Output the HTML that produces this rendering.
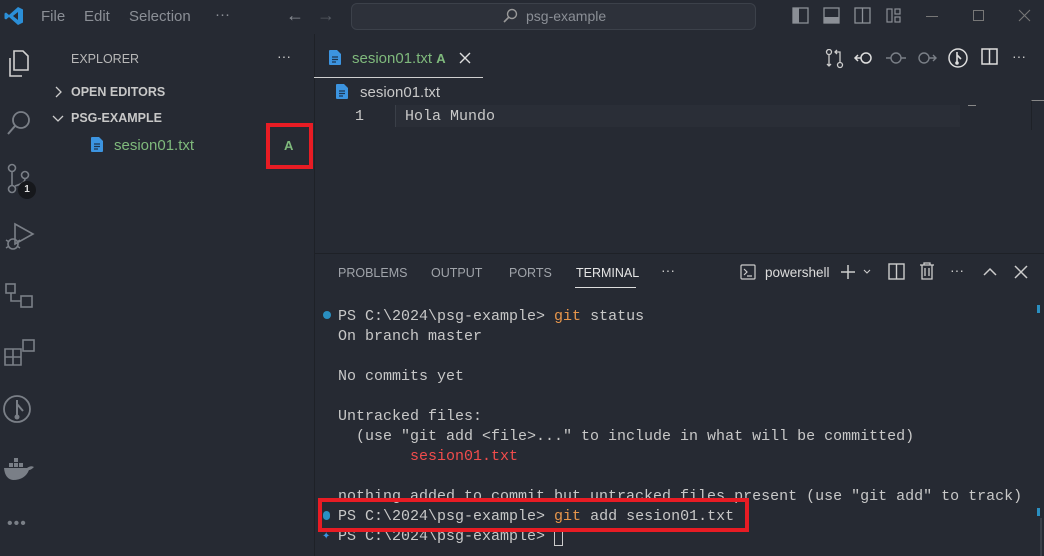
<!DOCTYPE html>
<html><head><style>
*{margin:0;padding:0;box-sizing:border-box}
body{width:1044px;height:556px;background:#262a33;font-family:"Liberation Sans",sans-serif;color:#ccc;position:relative;overflow:hidden}
.a{position:absolute}
.mono{font-family:"Liberation Mono",monospace;font-size:15px}
.t{position:absolute;left:338px;white-space:pre;color:#c8c8c8}
svg{position:absolute}
</style></head><body>
<!-- title bar -->
<svg style="left:4px;top:6px" width="20" height="20" viewBox="0 0 20 20"><path d="M14 1 L19 3.5 V16.5 L14 19 L5 11 L2 13.5 L0.5 12.5 V7.5 L2 6.5 L5 9 Z M14 6 L9 10 L14 14 Z" fill="#2b8fd8" fill-rule="evenodd"/></svg>
<div class="a" style="left:41px;top:8px;font-size:15px;color:#8b8f96">File</div>
<div class="a" style="left:84px;top:8px;font-size:15px;color:#8b8f96">Edit</div>
<div class="a" style="left:129px;top:8px;font-size:15px;color:#8b8f96">Selection</div>
<div class="a" style="left:215px;top:6px;font-size:15px;color:#8b8f96">···</div>
<div class="a" style="left:286px;top:5px;font-size:18px;color:#8b8f96">←</div>
<div class="a" style="left:317px;top:5px;font-size:18px;color:#555a62">→</div>
<div class="a" style="left:351px;top:3px;width:405px;height:27px;border:1px solid #3c414a;border-radius:6px;background:#2d313a"></div>
<svg style="left:502px;top:8px" width="16" height="16"><circle cx="10" cy="6" r="4.5" fill="none" stroke="#999" stroke-width="1.4"/><path d="M7 9 L2 14" stroke="#999" stroke-width="1.6"/></svg>
<div class="a" style="left:526px;top:8px;font-size:14px;color:#8b8f96">psg-example</div>
<svg style="left:792px;top:7px" width="120" height="18"><rect x="1" y="1" width="15" height="15" fill="none" stroke="#8b8f96" stroke-width="1.3"/><rect x="1" y="1" width="6" height="15" fill="#8b8f96"/><rect x="32" y="1" width="15" height="15" fill="none" stroke="#8b8f96" stroke-width="1.3"/><rect x="32" y="10" width="15" height="6" fill="#8b8f96"/><rect x="63" y="1" width="15" height="15" fill="none" stroke="#8b8f96" stroke-width="1.3"/><path d="M70.5 1V16" stroke="#8b8f96" stroke-width="1.3"/><rect x="95" y="2" width="5" height="13" fill="none" stroke="#8b8f96" stroke-width="1.2"/><rect x="103" y="2" width="5" height="5" fill="none" stroke="#8b8f96" stroke-width="1.2"/><rect x="103" y="10" width="5" height="5" fill="none" stroke="#8b8f96" stroke-width="1.2"/></svg>
<div class="a" style="left:926px;top:16px;width:12px;height:1px;background:#777"></div>
<div class="a" style="left:973px;top:10px;width:11px;height:11px;border:1px solid #777"></div>
<svg style="left:1018px;top:9px" width="13" height="13"><path d="M1 1L12 12M12 1L1 12" stroke="#777" stroke-width="1.1"/></svg>
<!-- activity bar -->
<svg style="left:4px;top:48px" width="28" height="32"><path d="M10 3H19L24 8V22H10Z M6 10V28H18" fill="none" stroke="#d0d0d0" stroke-width="1.6"/></svg>
<svg style="left:5px;top:108px" width="28" height="30"><circle cx="16" cy="12" r="8" fill="none" stroke="#7a7f87" stroke-width="1.8"/><path d="M10 18L3 26" stroke="#7a7f87" stroke-width="2"/></svg>
<svg style="left:5px;top:163px" width="26" height="32"><circle cx="7" cy="5" r="3.5" fill="none" stroke="#7a7f87" stroke-width="1.6"/><circle cx="7" cy="26" r="3.5" fill="none" stroke="#7a7f87" stroke-width="1.6"/><circle cx="20" cy="12" r="3.5" fill="none" stroke="#7a7f87" stroke-width="1.6"/><path d="M7 9V22M20 16Q20 20 10 23" fill="none" stroke="#7a7f87" stroke-width="1.6"/></svg>
<div class="a" style="left:18px;top:181px;width:18px;height:18px;border-radius:9px;background:#16181c;color:#ddd;font-size:10px;font-weight:bold;text-align:center;line-height:18px">1</div>
<svg style="left:3px;top:222px" width="32" height="32"><path d="M12 2L30 12L12 22Z" fill="none" stroke="#7a7f87" stroke-width="1.6"/><circle cx="10" cy="22" r="5" fill="none" stroke="#7a7f87" stroke-width="1.6"/><path d="M3 18L6 20M3 26L6 24M17 18L14 20M17 26L14 24" stroke="#7a7f87" stroke-width="1.4"/></svg>
<svg style="left:4px;top:282px" width="30" height="30"><rect x="2" y="2" width="9" height="9" fill="none" stroke="#7a7f87" stroke-width="1.6"/><rect x="17" y="14" width="11" height="11" fill="none" stroke="#7a7f87" stroke-width="1.6"/><path d="M7 11V19H17" fill="none" stroke="#7a7f87" stroke-width="1.6"/></svg>
<svg style="left:3px;top:337px" width="32" height="32"><path d="M2 12H18V28H2ZM2 20H18M10 12V28" fill="none" stroke="#7a7f87" stroke-width="1.6"/><rect x="20" y="3" width="11" height="11" fill="none" stroke="#7a7f87" stroke-width="1.6"/></svg>
<svg style="left:2px;top:393px" width="32" height="32"><circle cx="15" cy="16" r="13" fill="none" stroke="#7a7f87" stroke-width="1.8"/><path d="M15 7V24M15 11L21 18" stroke="#7a7f87" stroke-width="2"/><circle cx="15" cy="24" r="2.5" fill="#7a7f87"/></svg>
<svg style="left:3px;top:456px" width="32" height="26"><path d="M1 12H24Q28 9 31 11Q28 14 26 14Q22 24 10 24Q2 23 1 12Z" fill="#7a7f87"/><rect x="6" y="7" width="4" height="4" fill="#7a7f87"/><rect x="11" y="7" width="4" height="4" fill="#7a7f87"/><rect x="16" y="7" width="4" height="4" fill="#7a7f87"/><rect x="11" y="2" width="4" height="4" fill="#7a7f87"/></svg>
<div class="a" style="left:7px;top:515px;font-size:16px;color:#7a7f87;letter-spacing:1px">•••</div>
<!-- sidebar -->
<div class="a" style="left:314px;top:34px;width:1px;height:522px;background:#1e2127"></div>
<div class="a" style="left:71px;top:52px;font-size:12.5px;color:#b8b8b8">EXPLORER</div>
<div class="a" style="left:277px;top:48px;font-size:14px;color:#ccc">···</div>
<svg style="left:54px;top:86px" width="10" height="12"><path d="M2 1L7 6L2 11" fill="none" stroke="#ccc" stroke-width="1.3"/></svg>
<div class="a" style="left:71px;top:85px;font-size:12.5px;font-weight:bold;color:#c8c8c8">OPEN EDITORS</div>
<svg style="left:52px;top:114px" width="12" height="10"><path d="M1 2L6 7L11 2" fill="none" stroke="#ccc" stroke-width="1.3"/></svg>
<div class="a" style="left:71px;top:111px;font-size:12.5px;font-weight:bold;color:#c8c8c8">PSG-EXAMPLE</div>
<svg style="left:91px;top:137px" width="12" height="15"><path d="M0 1Q0 0 1 0H8L12 4V14Q12 15 11 15H1Q0 15 0 14Z" fill="#3c94e0"/><path d="M3 7H9M3 9.5H9M3 12H7" stroke="#1d3550" stroke-width="1.2"/></svg>
<div class="a" style="left:114px;top:137px;font-size:15px;color:#7fb97c">sesion01.txt</div>
<div class="a" style="left:284px;top:138px;font-size:13px;font-weight:bold;color:#7fb97c">A</div>
<div class="a" style="left:266px;top:123px;width:47px;height:46px;border:4px solid #e81c24"></div>
<!-- editor tabs -->
<svg style="left:329px;top:50px" width="12" height="15"><path d="M0 1Q0 0 1 0H8L12 4V14Q12 15 11 15H1Q0 15 0 14Z" fill="#3c94e0"/><path d="M3 7H9M3 9.5H9M3 12H7" stroke="#1d3550" stroke-width="1.2"/></svg>
<div class="a" style="left:352px;top:50px;font-size:15px;color:#7fb97c">sesion01.txt <b style="font-size:13px">A</b></div>
<svg style="left:459px;top:52px" width="12" height="12"><path d="M1 1L11 11M11 1L1 11" stroke="#ddd" stroke-width="1.4"/></svg>
<div class="a" style="left:314px;top:77px;width:169px;height:1px;background:#cfcfcf"></div>
<svg style="left:825px;top:49px" width="20" height="20"><circle cx="4" cy="3" r="2.5" fill="none" stroke="#ccc" stroke-width="1.3"/><circle cx="15" cy="16" r="2.5" fill="none" stroke="#ccc" stroke-width="1.3"/><path d="M4 6V17M15 13V3H10M12 1L10 3L12 5M2 15L4 17L6 15" fill="none" stroke="#ccc" stroke-width="1.3"/></svg>
<svg style="left:853px;top:49px" width="22" height="18"><circle cx="13" cy="9" r="5" fill="none" stroke="#ddd" stroke-width="1.5"/><path d="M8 9H2M5 6L2 9L5 12" fill="none" stroke="#ddd" stroke-width="1.5"/></svg>
<svg style="left:885px;top:49px" width="22" height="18"><circle cx="11" cy="9" r="5" fill="none" stroke="#7a7f87" stroke-width="1.4"/><path d="M1 9H6M16 9H21" stroke="#7a7f87" stroke-width="1.4"/></svg>
<svg style="left:916px;top:49px" width="22" height="18"><circle cx="8" cy="9" r="5" fill="none" stroke="#7a7f87" stroke-width="1.4"/><path d="M13 9H20M17 6L20 9L17 12" fill="none" stroke="#7a7f87" stroke-width="1.4"/></svg>
<svg style="left:947px;top:47px" width="22" height="22"><circle cx="11" cy="11" r="9" fill="none" stroke="#ddd" stroke-width="1.5"/><path d="M10 5V16M10 8L14 12" stroke="#ddd" stroke-width="1.6"/><circle cx="10" cy="16" r="1.8" fill="#ddd"/></svg>
<svg style="left:981px;top:48px" width="18" height="18"><rect x="1" y="1" width="15" height="15" fill="none" stroke="#ddd" stroke-width="1.5"/><path d="M8.5 1V16" stroke="#ddd" stroke-width="1.5"/></svg>
<div class="a" style="left:1012px;top:48px;font-size:14px;color:#ccc">···</div>
<!-- breadcrumb + code -->
<svg style="left:336px;top:84px" width="12" height="15"><path d="M0 1Q0 0 1 0H8L12 4V14Q12 15 11 15H1Q0 15 0 14Z" fill="#3c94e0"/><path d="M3 7H9M3 9.5H9M3 12H7" stroke="#1d3550" stroke-width="1.2"/></svg>
<div class="a" style="left:360px;top:84px;font-size:15px;color:#c8c8c8">sesion01.txt</div>
<div class="a" style="left:395px;top:105px;width:565px;height:22px;background:#2a2e37;border-left:1px solid #3a3f48"></div>
<div class="a mono" style="left:355px;top:108px;color:#c8c8c8">1</div>
<div class="a mono" style="left:405px;top:108px;color:#c8c8c8">Hola Mundo</div>
<div class="a" style="left:968px;top:105px;width:8px;height:1px;background:#888"></div>
<div class="a" style="left:1031px;top:100px;width:13px;height:30px;border-left:1px solid #1e2127;border-top:1px solid #888"></div>
<!-- panel -->
<div class="a" style="left:314px;top:253px;width:730px;height:1px;background:#1e2127"></div>
<div class="a" style="left:338px;top:266px;font-size:12.5px;color:#a0a4aa">PROBLEMS</div>
<div class="a" style="left:431px;top:266px;font-size:12.5px;color:#a0a4aa">OUTPUT</div>
<div class="a" style="left:509px;top:266px;font-size:12.5px;color:#a0a4aa">PORTS</div>
<div class="a" style="left:576px;top:266px;font-size:12.5px;color:#e6e6e6">TERMINAL</div>
<div class="a" style="left:575px;top:287px;width:61px;height:1px;background:#ddd"></div>
<div class="a" style="left:661px;top:262px;font-size:14px;color:#ccc">···</div>
<svg style="left:740px;top:264px" width="16" height="16"><rect x="1" y="1" width="14" height="14" rx="1" fill="none" stroke="#ccc" stroke-width="1.2"/><path d="M4 5L7 8L4 11M7 12H12" fill="none" stroke="#ccc" stroke-width="1.2"/></svg>
<div class="a" style="left:765px;top:265px;font-size:13.5px;color:#ddd">powershell</div>
<svg style="left:840px;top:264px" width="34" height="16"><path d="M8 1V15M1 8H15" stroke="#ccc" stroke-width="1.5"/><path d="M24 6L27 9L30 6" fill="none" stroke="#ccc" stroke-width="1.1"/></svg>
<svg style="left:888px;top:263px" width="18" height="18"><rect x="1" y="1" width="15" height="15" fill="none" stroke="#ccc" stroke-width="1.4"/><path d="M8.5 1V16" stroke="#ccc" stroke-width="1.4"/></svg>
<svg style="left:919px;top:262px" width="16" height="18"><path d="M1 3H15M5 3V1H11V3M3 3V17H13V3M6 6V14M10 6V14" fill="none" stroke="#ccc" stroke-width="1.3"/></svg>
<div class="a" style="left:950px;top:262px;font-size:14px;color:#ccc">···</div>
<svg style="left:982px;top:265px" width="16" height="14"><path d="M2 10L8 4L14 10" fill="none" stroke="#ccc" stroke-width="1.5"/></svg>
<svg style="left:1014px;top:265px" width="14" height="14"><path d="M1 1L13 13M13 1L1 13" stroke="#ccc" stroke-width="1.5"/></svg>
<!-- terminal -->
<div class="a" style="left:323px;top:311px;width:8px;height:8px;border-radius:4px;background:#2a8fc1"></div>
<div class="t mono" style="top:308px">PS C:\2024\psg-example&gt; <span style="color:#e8964b">git</span> status</div>
<div class="t mono" style="top:328px">On branch master</div>
<div class="t mono" style="top:368px">No commits yet</div>
<div class="t mono" style="top:408px">Untracked files:</div>
<div class="t mono" style="top:428px">  (use "git add &lt;file&gt;..." to include in what will be committed)</div>
<div class="t mono" style="top:448px;color:#f14c4c">        sesion01.txt</div>
<div class="t mono" style="top:488px">nothing added to commit but untracked files present (use "git add" to track)</div>
<div class="a" style="left:323px;top:511px;width:7px;height:9px;border-radius:4px;background:#2a8fc1"></div>
<div class="t mono" style="top:508px">PS C:\2024\psg-example&gt; <span style="color:#e8964b">git</span> add sesion01.txt</div>
<div class="a" style="left:322px;top:531px;font-size:10px;color:#3c94e0">✦</div>
<div class="t mono" style="top:528px">PS C:\2024\psg-example&gt; </div>
<div class="a" style="left:554px;top:530px;width:9px;height:16px;border:1px solid #ccc"></div>
<div class="a" style="left:318px;top:498px;width:431px;height:34px;border:4px solid #e81c24"></div>
<div class="a" style="left:1037px;top:305px;width:3px;height:8px;background:#2a8fc1"></div>
<div class="a" style="left:1037px;top:508px;width:3px;height:8px;background:#2a8fc1"></div>
<div class="a" style="left:1040px;top:518px;width:2px;height:38px;background:#3a3f48"></div>
</body></html>
